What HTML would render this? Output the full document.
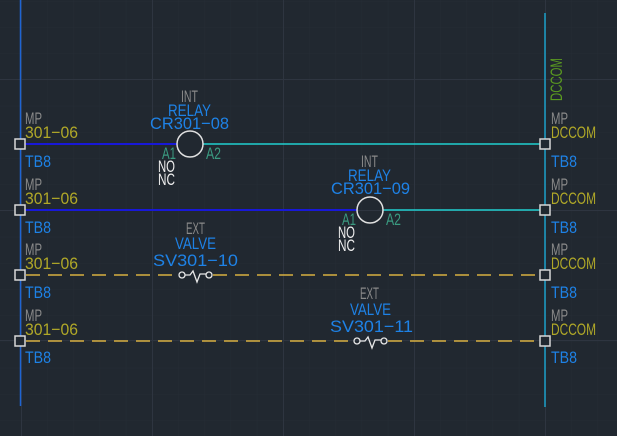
<!DOCTYPE html>
<html><head><style>
html,body{margin:0;padding:0;background:#212830;}
svg{display:block}
text{font-family:"Liberation Sans",sans-serif;font-size:17px;}
</style></head><body>
<svg width="617" height="436" viewBox="0 0 617 436" xmlns="http://www.w3.org/2000/svg">
<rect width="617" height="436" fill="#212830"/>
<defs>
<pattern id="g" width="26.2" height="26.2" patternUnits="userSpaceOnUse" x="21" y="1">
<path d="M0 0H26.2M0 0V26.2" stroke="#252c35" stroke-width="1" fill="none"/>
</pattern>
</defs>
<rect width="617" height="436" fill="url(#g)"/>
<g stroke="#2e3540" stroke-width="1">
<line x1="0" y1="79.5" x2="617" y2="79.5"/>
<line x1="0" y1="210.5" x2="617" y2="210.5"/>
<line x1="0" y1="340.5" x2="617" y2="340.5"/>
<line x1="21.5" y1="0" x2="21.5" y2="436"/>
<line x1="152.5" y1="0" x2="152.5" y2="436"/>
<line x1="283.5" y1="0" x2="283.5" y2="436"/>
<line x1="414.5" y1="0" x2="414.5" y2="436"/>
<line x1="545.5" y1="0" x2="545.5" y2="436"/>
</g>
<line x1="20.5" y1="0" x2="20.5" y2="406" stroke="#1e64d2" stroke-width="1.5"/>
<line x1="545" y1="13" x2="545" y2="407" stroke="#1a9fc8" stroke-width="1.5"/>
<line x1="20" y1="144" x2="177" y2="144" stroke="#1818d8" stroke-width="2"/>
<line x1="203" y1="144" x2="545" y2="144" stroke="#20d0d0" stroke-width="1.5"/>
<circle cx="190" cy="144" r="13" fill="none" stroke="#e0e0e0" stroke-width="1.5"/>
<line x1="20" y1="210" x2="357" y2="210" stroke="#1818d8" stroke-width="2"/>
<line x1="383" y1="210" x2="545" y2="210" stroke="#20d0d0" stroke-width="1.5"/>
<circle cx="370" cy="210" r="13" fill="none" stroke="#e0e0e0" stroke-width="1.5"/>
<g stroke="#d8b040" stroke-width="1.5" stroke-dasharray="14 8">
<line x1="26" y1="275" x2="178" y2="275"/>
<line x1="213" y1="275" x2="540" y2="275"/>
<line x1="26" y1="341" x2="353" y2="341"/>
<line x1="388" y1="341" x2="540" y2="341"/>
</g>
<g fill="none" stroke="#e8e8e8" stroke-width="1.3">
<circle cx="182" cy="275" r="3"/><circle cx="209" cy="275" r="3"/>
<path d="M185 275H190L193 271L197 282L200 274H206"/>
<circle cx="357" cy="341" r="3"/><circle cx="384" cy="341" r="3"/>
<path d="M360 341H365L368 337L372 348L375 340H381"/>
</g>
<g fill="#212830" stroke="#d8d8d8" stroke-width="1.5">
<rect x="15" y="139" width="10" height="10"/><rect x="15" y="205" width="10" height="10"/>
<rect x="15" y="270" width="10" height="10"/><rect x="15" y="336" width="10" height="10"/>
<rect x="540" y="139" width="10" height="10"/><rect x="540" y="205" width="10" height="10"/>
<rect x="540" y="270" width="10" height="10"/><rect x="540" y="336" width="10" height="10"/>
</g>
<g>
<text x="25" y="124" fill="#8a8a8a" textLength="17" lengthAdjust="spacingAndGlyphs">MP</text>
<text x="25" y="138" fill="#b0a828" textLength="53" lengthAdjust="spacingAndGlyphs">301−06</text>
<text x="25" y="167" fill="#1e82e6" textLength="26" lengthAdjust="spacingAndGlyphs">TB8</text>
<text x="25" y="190" fill="#8a8a8a" textLength="17" lengthAdjust="spacingAndGlyphs">MP</text>
<text x="25" y="204" fill="#b0a828" textLength="53" lengthAdjust="spacingAndGlyphs">301−06</text>
<text x="25" y="233" fill="#1e82e6" textLength="26" lengthAdjust="spacingAndGlyphs">TB8</text>
<text x="25" y="255" fill="#8a8a8a" textLength="17" lengthAdjust="spacingAndGlyphs">MP</text>
<text x="25" y="269" fill="#b0a828" textLength="53" lengthAdjust="spacingAndGlyphs">301−06</text>
<text x="25" y="298" fill="#1e82e6" textLength="26" lengthAdjust="spacingAndGlyphs">TB8</text>
<text x="25" y="321" fill="#8a8a8a" textLength="17" lengthAdjust="spacingAndGlyphs">MP</text>
<text x="25" y="335" fill="#b0a828" textLength="53" lengthAdjust="spacingAndGlyphs">301−06</text>
<text x="25" y="363" fill="#1e82e6" textLength="26" lengthAdjust="spacingAndGlyphs">TB8</text>
</g>
<g>
<text x="551" y="124" fill="#8a8a8a" textLength="17" lengthAdjust="spacingAndGlyphs">MP</text>
<text x="551" y="138" fill="#b0a828" textLength="45" lengthAdjust="spacingAndGlyphs">DCCOM</text>
<text x="551" y="167" fill="#1e82e6" textLength="26" lengthAdjust="spacingAndGlyphs">TB8</text>
<text x="551" y="190" fill="#8a8a8a" textLength="17" lengthAdjust="spacingAndGlyphs">MP</text>
<text x="551" y="204" fill="#b0a828" textLength="45" lengthAdjust="spacingAndGlyphs">DCCOM</text>
<text x="551" y="233" fill="#1e82e6" textLength="26" lengthAdjust="spacingAndGlyphs">TB8</text>
<text x="551" y="255" fill="#8a8a8a" textLength="17" lengthAdjust="spacingAndGlyphs">MP</text>
<text x="551" y="269" fill="#b0a828" textLength="45" lengthAdjust="spacingAndGlyphs">DCCOM</text>
<text x="551" y="298" fill="#1e82e6" textLength="26" lengthAdjust="spacingAndGlyphs">TB8</text>
<text x="551" y="321" fill="#8a8a8a" textLength="17" lengthAdjust="spacingAndGlyphs">MP</text>
<text x="551" y="335" fill="#b0a828" textLength="45" lengthAdjust="spacingAndGlyphs">DCCOM</text>
<text x="551" y="363" fill="#1e82e6" textLength="26" lengthAdjust="spacingAndGlyphs">TB8</text>
<text transform="translate(562,101) rotate(-90)" fill="#5a9a20" textLength="43" lengthAdjust="spacingAndGlyphs">DCCOM</text>
</g>
<text x="181" y="102" fill="#8a8a8a" textLength="17" lengthAdjust="spacingAndGlyphs">INT</text>
<text x="168" y="116" fill="#1e82e6" textLength="43" lengthAdjust="spacingAndGlyphs">RELAY</text>
<text x="150" y="129" fill="#1e82e6" textLength="79" lengthAdjust="spacingAndGlyphs">CR301−08</text>
<text x="162" y="159" fill="#3a9a80" textLength="14" lengthAdjust="spacingAndGlyphs">A1</text>
<text x="206" y="159" fill="#3a9a80" textLength="15" lengthAdjust="spacingAndGlyphs">A2</text>
<text x="158" y="172" fill="#eeeeee" textLength="17" lengthAdjust="spacingAndGlyphs">NO</text>
<text x="158" y="185" fill="#eeeeee" textLength="17" lengthAdjust="spacingAndGlyphs">NC</text>
<text x="361" y="167" fill="#8a8a8a" textLength="17" lengthAdjust="spacingAndGlyphs">INT</text>
<text x="348" y="181" fill="#1e82e6" textLength="43" lengthAdjust="spacingAndGlyphs">RELAY</text>
<text x="331" y="194" fill="#1e82e6" textLength="79" lengthAdjust="spacingAndGlyphs">CR301−09</text>
<text x="342" y="225" fill="#3a9a80" textLength="14" lengthAdjust="spacingAndGlyphs">A1</text>
<text x="386" y="225" fill="#3a9a80" textLength="15" lengthAdjust="spacingAndGlyphs">A2</text>
<text x="338" y="238" fill="#eeeeee" textLength="17" lengthAdjust="spacingAndGlyphs">NO</text>
<text x="338" y="251" fill="#eeeeee" textLength="17" lengthAdjust="spacingAndGlyphs">NC</text>
<text x="186" y="234" fill="#8a8a8a" textLength="19" lengthAdjust="spacingAndGlyphs">EXT</text>
<text x="175" y="249" fill="#1e82e6" textLength="41" lengthAdjust="spacingAndGlyphs">VALVE</text>
<text x="153" y="266" fill="#1e82e6" textLength="85" lengthAdjust="spacingAndGlyphs">SV301−10</text>
<text x="360" y="299" fill="#8a8a8a" textLength="19" lengthAdjust="spacingAndGlyphs">EXT</text>
<text x="350" y="315" fill="#1e82e6" textLength="41" lengthAdjust="spacingAndGlyphs">VALVE</text>
<text x="330" y="332" fill="#1e82e6" textLength="83" lengthAdjust="spacingAndGlyphs">SV301−11</text>
</svg>
</body></html>
